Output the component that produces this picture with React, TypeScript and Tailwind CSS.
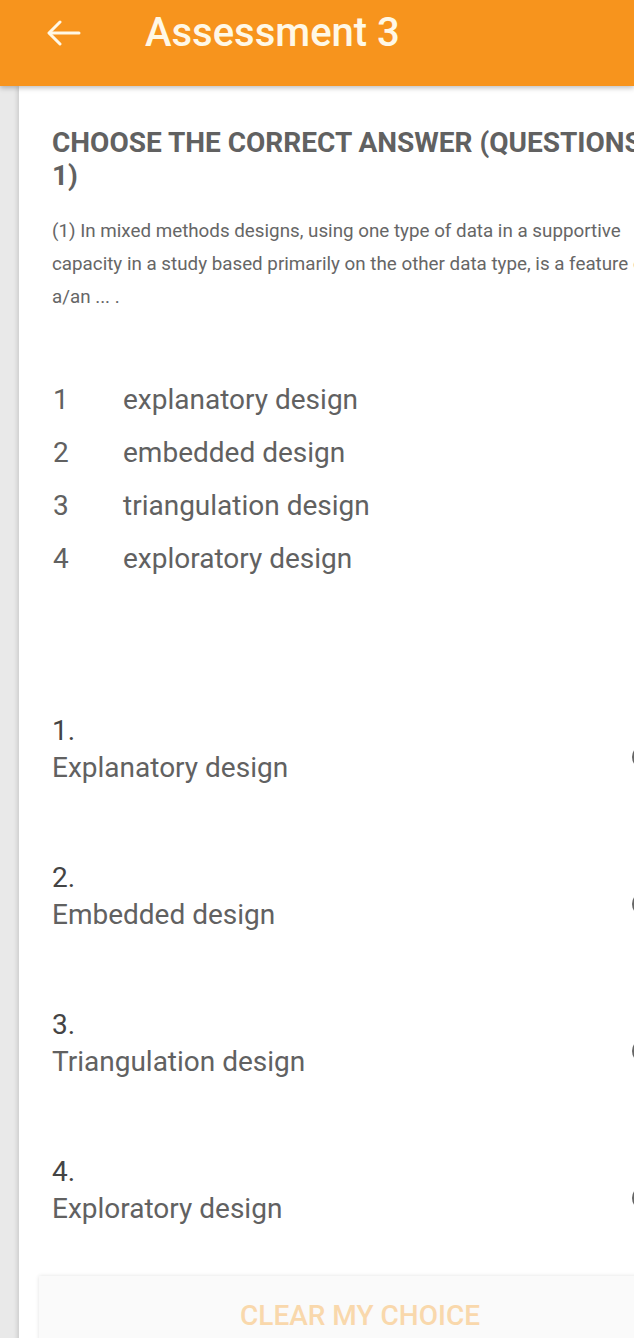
import React from "react";

const OPTIONS = ["explanatory design", "embedded design", "triangulation design", "exploratory design"];
const CHOICES = ["Explanatory design", "Embedded design", "Triangulation design", "Exploratory design"];

export default function App() {
  return (
    <div className="relative w-[634px] h-[1338px] overflow-hidden bg-[#e9e9e9] font-['Roboto',sans-serif]">
      {/* Top bar */}
      <header className="relative z-10 h-[86px] bg-[#f7941d] flex items-center shadow-[0_2px_5px_rgba(0,0,0,0.25)]">
        <div className="w-[145px] flex items-center pl-[47px] -mt-[20px]">
          <svg width="34" height="26" viewBox="0 0 34 26" fill="none" stroke="#fff8e6" strokeWidth="3" strokeLinecap="round" strokeLinejoin="round">
            <path d="M32 13H3" />
            <path d="M13 2L2 13l11 11" />
          </svg>
        </div>
        <h1 className="text-[40px] leading-none font-medium text-[#fff8e6] -mt-[20px]">Assessment 3</h1>
      </header>

      {/* Card */}
      <div className="pl-[19px]">
        <div className="w-[682px] bg-white shadow-[-2px_0_4px_rgba(0,0,0,0.12)] px-[33px] pt-[40px] pb-[40px]">
          <h2 className="text-[28px] leading-[33px] font-bold text-[#616161]">
            CHOOSE THE CORRECT ANSWER (QUESTIONS 1)
          </h2>
          <p className="mt-[23px] text-[18.8px] leading-[33px] text-[#666666]">
            (1) In mixed methods designs, using one type of data in a supportive capacity in a study based primarily on the other data type, is a feature of a/an ... .
          </p>

          <div className="mt-[59px] flex flex-col">
            {OPTIONS.map((o, i) => (
              <div key={o} className="flex h-[53px] items-center text-[28px] text-[#616161]">
                <span className="w-[71px] pl-[1px]">{i + 1}</span>
                <span>{o}</span>
              </div>
            ))}
          </div>

          <div className="mt-[127px] flex flex-col gap-[73px]">
            {CHOICES.map((c, i) => (
              <div key={c} className="flex items-center justify-between">
                <div className="flex flex-col">
                  <span className="text-[28px] leading-[37px] text-[#444444]">{i + 1}.</span>
                  <span className="text-[28px] leading-[37px] text-[#616161]">{c}</span>
                </div>
                <span className="mt-[16px] mr-[12px] w-[24px] h-[24px] rounded-full border-2 border-[#666666]" />
              </div>
            ))}
          </div>

          <button className="mt-[49px] -ml-[13px] w-[642px] h-[80px] bg-[#fafafa] shadow-[0_0_4px_rgba(0,0,0,0.12)] text-[28px] font-medium text-[#f9d8ac]">
            CLEAR MY CHOICE
          </button>
        </div>
      </div>
    </div>
  );
}
